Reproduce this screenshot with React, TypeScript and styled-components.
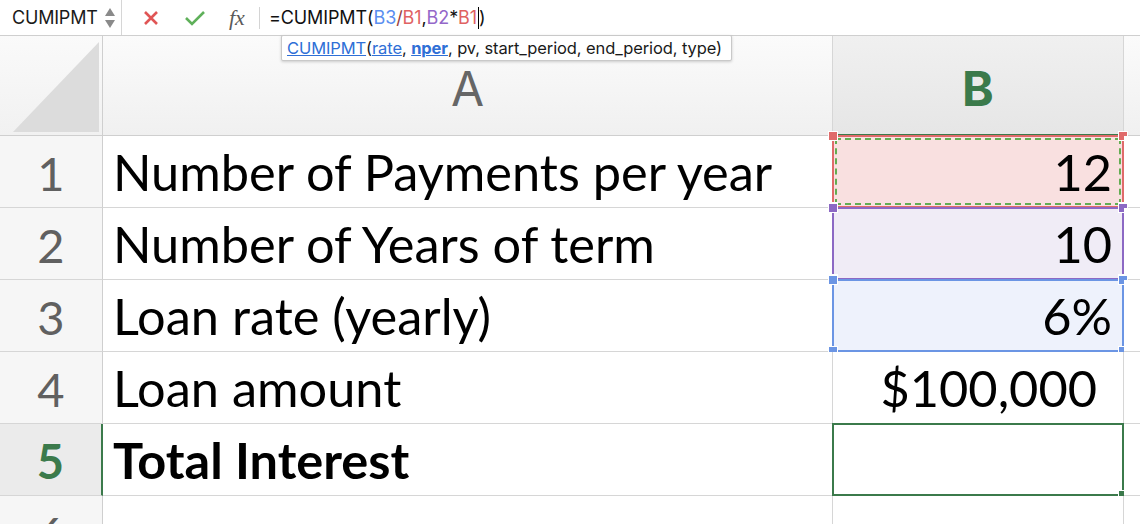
import styled, { createGlobalStyle } from "styled-components";

const GlobalStyle = createGlobalStyle`
  html, body {
    margin: 0;
    padding: 0;
    background: #ffffff;
    overflow: hidden;
  }
  * {
    box-sizing: border-box;
  }
`;

const UI_FONT = `Inter, "Liberation Sans", Arial, sans-serif`;
const CELL_FONT = `Lato, "Open Sans", "Liberation Sans", sans-serif`;

const Page = styled.div`
  width: 1140px;
  height: 524px;
  overflow: hidden;
  font-family: ${UI_FONT};
`;

const FormulaBar = styled.div`
  position: relative;
  display: flex;
  align-items: center;
  height: 36px;
  border-bottom: 1px solid #cfcfcf;
  background: #ffffff;
  z-index: 5;
`;

const NameBox = styled.div`
  display: flex;
  align-items: center;
  gap: 6px;
  width: 122px;
  height: 100%;
  padding-left: 12px;
  border-right: 1px solid #d6d6d6;
  font-size: 18px;
  color: #1a1a1a;
  letter-spacing: -0.2px;
`;

const Actions = styled.div`
  display: flex;
  align-items: center;
  gap: 24px;
  height: 100%;
  padding-left: 20px;
`;

const ActionIcon = styled.span`
  display: flex;
  align-items: center;
`;

const Fx = styled.span`
  font-family: "Liberation Serif", "DejaVu Serif", serif;
  font-style: italic;
  font-size: 22px;
  color: #5a5a5a;
  margin-left: -1px;
`;

const ShortDivider = styled.div`
  width: 1px;
  height: 22px;
  background: #d4d4d4;
  margin-left: 14px;
`;

const Formula = styled.div`
  display: flex;
  align-items: center;
  margin-left: 9px;
  font-size: 18px;
  color: #111111;
  letter-spacing: -0.1px;
  white-space: pre;
`;

const Ref = styled.span<{ $color: string }>`
  color: ${({ $color }) => $color};
`;

const Caret = styled.span`
  display: inline-block;
  width: 1px;
  height: 22px;
  background: #000000;
  margin: 0 0 0 1px;
`;

const Tooltip = styled.div`
  position: absolute;
  left: 281px;
  top: 35px;
  width: 451px;
  height: 26px;
  display: flex;
  align-items: center;
  padding-left: 5px;
  background: #ffffff;
  border: 1px solid #c9c9c9;
  border-radius: 2px;
  box-shadow: 0 1px 3px rgba(0, 0, 0, 0.18);
  font-size: 16.5px;
  color: #1a1a1a;
  white-space: pre;
  letter-spacing: -0.1px;
`;

const Link = styled.span<{ $bold?: boolean }>`
  color: #2f6fd6;
  text-decoration: underline;
  font-weight: ${({ $bold }) => ($bold ? 700 : 400)};
`;

const Sheet = styled.div`
  display: grid;
  grid-template-columns: 103px 730px 291px 1fr;
  grid-template-rows: 100px repeat(6, 72px);
`;

const Corner = styled.div`
  position: relative;
  background: linear-gradient(#fafafa, #f1f1f1);
  border-right: 1px solid #cfcfcf;
  border-bottom: 1px solid #cfcfcf;
`;

const ColHeader = styled.div<{ $active?: boolean }>`
  display: flex;
  align-items: center;
  justify-content: center;
  padding-top: 6px;
  background: ${({ $active }) =>
    $active
      ? "linear-gradient(#f0f0f0, #e6e6e6)"
      : "linear-gradient(#fbfbfb, #f0f0f0)"};
  border-right: 1px solid #d6d6d6;
  border-bottom: ${({ $active }) =>
    $active ? "2px solid #3b7a4b" : "1px solid #cfcfcf"};
  font-family: ${UI_FONT};
  font-size: 48px;
  font-weight: ${({ $active }) => ($active ? 700 : 400)};
  color: ${({ $active }) => ($active ? "#3b7a4b" : "#666666")};
`;

const RowHeader = styled.div<{ $active?: boolean }>`
  display: flex;
  align-items: flex-end;
  justify-content: center;
  padding-bottom: 10px;
  background: ${({ $active }) => ($active ? "#ebebeb" : "#f6f6f6")};
  border-right: ${({ $active }) =>
    $active ? "2px solid #3b7a4b" : "1px solid #cfcfcf"};
  border-bottom: 1px solid #d6d6d6;
  font-family: ${CELL_FONT};
  font-size: 47px;
  line-height: 1;
  font-weight: ${({ $active }) => ($active ? 700 : 400)};
  color: ${({ $active }) => ($active ? "#3b7a4b" : "#606060")};
`;

const Cell = styled.div<{ $align?: "left" | "right"; $bold?: boolean; $fill?: string; $pad?: number }>`
  position: relative;
  display: flex;
  align-items: flex-end;
  justify-content: ${({ $align }) => ($align === "right" ? "flex-end" : "flex-start")};
  padding: 0 ${({ $pad }) => $pad ?? 10}px 10px 10px;
  background: ${({ $fill }) => $fill ?? "#ffffff"};
  border-right: 1px solid #d6d6d6;
  border-bottom: 1px solid #d6d6d6;
  font-family: ${CELL_FONT};
  font-size: 50.5px;
  line-height: 1;
  font-weight: ${({ $bold }) => ($bold ? 700 : 400)};
  color: #000000;
  white-space: nowrap;
`;

const Frame = styled.div<{ $color: string }>`
  position: absolute;
  top: -1px;
  left: -1px;
  right: -1px;
  bottom: -1px;
  border: 2px solid ${({ $color }) => $color};
  pointer-events: none;
`;

const Marquee = styled.div`
  position: absolute;
  inset: 1px;
  border: 2px dashed #63ad52;
`;

const Handle = styled.span<{ $color: string; $x: "l" | "r"; $y: "t" | "b" }>`
  position: absolute;
  width: 10px;
  height: 10px;
  background: ${({ $color }) => $color};
  border: 1px solid #ffffff;
  ${({ $x }) => ($x === "l" ? "left" : "right")}: -6px;
  ${({ $y }) => ($y === "t" ? "top" : "bottom")}: -6px;
`;

const Corners = ({ color }: { color: string }) => (
  <>
    <Handle $color={color} $x="l" $y="t" />
    <Handle $color={color} $x="r" $y="t" />
    <Handle $color={color} $x="l" $y="b" />
    <Handle $color={color} $x="r" $y="b" />
  </>
);

const CrossIcon = () => (
  <svg width="18" height="18" viewBox="0 0 18 18">
    <path d="M3 3 L15 15 M15 3 L3 15" stroke="#e05555" strokeWidth="2.6" strokeLinecap="butt" />
  </svg>
);

const CheckIcon = () => (
  <svg width="22" height="18" viewBox="0 0 22 18">
    <path d="M2 9 L8 15 L20 3" stroke="#5fb05a" strokeWidth="2.6" fill="none" />
  </svg>
);

const Stepper = () => (
  <svg width="12" height="24" viewBox="0 0 12 24">
    <path d="M6 2 L11 10 L1 10 Z" fill="#8a8a8a" />
    <path d="M6 22 L11 14 L1 14 Z" fill="#8a8a8a" />
  </svg>
);

const rows = [
  { label: "Number of Payments per year", value: "12", range: "red" },
  { label: "Number of Years of term", value: "10", range: "purple" },
  { label: "Loan rate (yearly)", value: "6%", range: "blue" },
  { label: "Loan amount", value: "$100,000", range: "" },
  { label: "Total Interest", value: "", range: "active" },
  { label: "", value: "", range: "" },
];

const ranges: Record<string, { line: string; fill: string }> = {
  red: { line: "#e06b6b", fill: "#f9e0e0" },
  purple: { line: "#8c69c4", fill: "#f0ecf6" },
  blue: { line: "#6b95e4", fill: "#eef2fc" },
};

const App = () => {
  return (
    <Page>
      <GlobalStyle />
      <FormulaBar>
        <NameBox>
          CUMIPMT
          <Stepper />
        </NameBox>
        <Actions>
          <ActionIcon>
            <CrossIcon />
          </ActionIcon>
          <ActionIcon>
            <CheckIcon />
          </ActionIcon>
          <Fx>fx</Fx>
        </Actions>
        <ShortDivider />
        <Formula>
          =CUMIPMT(
          <Ref $color="#5a8ef0">B3</Ref>
          <Ref $color="#9a4040">/</Ref>
          <Ref $color="#e06262">B1</Ref>,
          <Ref $color="#9467c9">B2</Ref>*
          <Ref $color="#e06262">B1</Ref>
          <Caret />)
        </Formula>
        <Tooltip>
          <Link>CUMIPMT</Link>(<Link>rate</Link>, <Link $bold>nper</Link>, pv, start_period, end_period, type)
        </Tooltip>
      </FormulaBar>

      <Sheet>
        <Corner>
          <svg width="103" height="100" viewBox="0 0 103 100" style={{ position: "absolute", inset: 0 }}>
            <path d="M13 96 L99 96 L99 6 Z" fill="#dcdcdc" />
          </svg>
        </Corner>
        <ColHeader>A</ColHeader>
        <ColHeader $active>B</ColHeader>
        <ColHeader />

        {rows.map((row, i) => {
          const r = ranges[row.range];
          const active = row.range === "active";
          return [
            <RowHeader key={`h${i}`} $active={active}>
              {i + 1}
            </RowHeader>,
            <Cell key={`a${i}`} $bold={active}>
              {row.label}
            </Cell>,
            <Cell
              key={`b${i}`}
              $align="right"
              $fill={r?.fill}
              $pad={row.value.startsWith("$") ? 26 : 11}
            >
              {row.value}
              {r && (
                <Frame $color={r.line}>
                  {row.range === "red" && <Marquee />}
                  <Corners color={r.line} />
                </Frame>
              )}
              {active && (
                <Frame $color="#3b7a4b">
                  <Handle $color="#3b7a4b" $x="r" $y="b" />
                </Frame>
              )}
            </Cell>,
            <Cell key={`c${i}`} />,
          ];
        })}
      </Sheet>
    </Page>
  );
};

export default App;
